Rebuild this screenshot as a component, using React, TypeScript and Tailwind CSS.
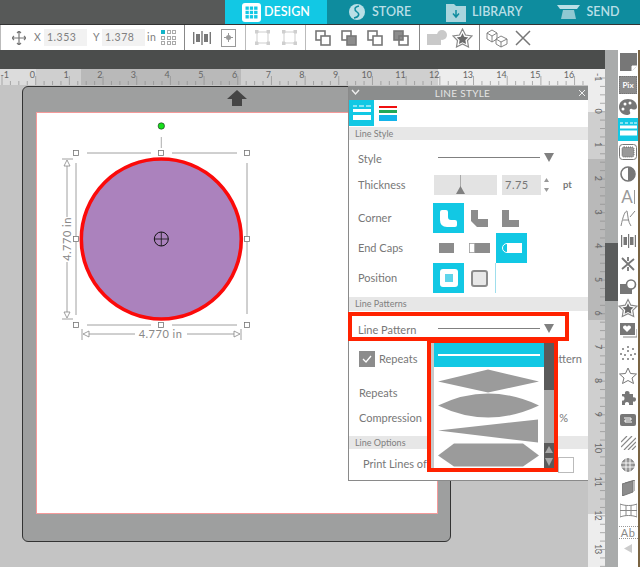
import type { ReactNode } from "react"

const FONT = "font-['Lato','Liberation_Sans',sans-serif]"

function Ruler() {
  const ticks = Array.from({ length: 72 }, (_, i) => i)
  return (
    <svg viewBox="0 69 588 16" className="block h-[16px] w-[588px]">
      <rect x="0" y="69" width="588" height="16" fill="#ededed" />
      <rect x="0" y="69" width="36" height="16" fill="#dcdcdc" />
      <rect x="36" y="69" width="402" height="16" fill="#cfcfcf" />
      <rect x="81" y="69" width="160" height="16" fill="#b9b9b9" />
      {ticks.map((i) => {
        const x = 2 + i * 8.42
        const major = i % 4 === 0
        return <line key={i} x1={x} x2={x} y1={major ? 76 : 81} y2="85" stroke="#8f8f8f" strokeWidth="0.7" />
      })}
      {Array.from({ length: 18 }, (_, i) => i - 1).map((n) => (
        <text key={n} x={n === -1 ? 9 : 36 + n * 33.7 - 1} y="78" textAnchor="end" fontSize="9" fill="#666" fontFamily="Lato">
          {n}
        </text>
      ))}
    </svg>
  )
}

function VerticalRuler() {
  const ticks = Array.from({ length: 60 }, (_, i) => i)
  return (
    <svg viewBox="588 69 17 498" className="block h-[498px] w-[17px] shrink-0">
      <rect x="588" y="69" width="17" height="498" fill="#ededed" />
      <rect x="588" y="112" width="17" height="402" fill="#cfcfcf" />
      <rect x="588" y="159" width="17" height="161" fill="#b9b9b9" />
      {ticks.map((i) => {
        const y = 78 + i * 8.42
        const major = i % 4 === 0
        return <line key={i} x1={major ? 596 : 600} x2="605" y1={y} y2={y} stroke="#8f8f8f" strokeWidth="0.7" />
      })}
      {Array.from({ length: 15 }, (_, i) => i - 1).map((n) => {
        const y = 112 + n * 33.7
        return (
          <text key={n} x="0" y="0" transform={`translate(595 ${y - 1}) rotate(90)`} textAnchor="middle" fontSize="9" fill="#666" fontFamily="Lato">
            {n}
          </text>
        )
      })}
    </svg>
  )
}

function Handle({ x, y }: { x: number; y: number }) {
  return <rect x={x - 2.5} y={y - 2.5} width="5" height="5" fill="#fff" stroke="#777" strokeWidth="0.8" />
}

function Artwork() {
  const handles = [
    [76, 153], [161, 153], [247, 153], [76, 239], [247, 239], [76, 325], [161, 325], [247, 325],
  ]
  return (
    <svg viewBox="0 85 348 482" className="absolute left-0 top-0 h-[482px] w-[348px]">
      <path d="M237 90 L247 99 L242 99 L242 106 L232 106 L232 99 L227 99 Z" fill="#454545" />
      <circle cx="161.3" cy="239" r="80" fill="#ab82bd" stroke="#fb0a0a" strokeWidth="3.6" />
      <circle cx="161.3" cy="239" r="7" fill="none" stroke="#111" strokeWidth="1" />
      <path d="M154.3 239 H168.3 M161.3 232 V246" stroke="#111" strokeWidth="0.8" />
      <circle cx="161.3" cy="126" r="3.2" fill="#16e01c" stroke="#222" strokeWidth="0.6" />
      <path d="M161.3 137 V148" stroke="#999" strokeWidth="0.8" />
      <path d="M87 153 H151 M172 153 H237 M76 163 V315 M247 163 V314 M87 325 H151 M172 325 H237" stroke="#888" strokeWidth="0.8" fill="none" />
      {handles.map(([x, y]) => (
        <Handle key={`${x}-${y}`} x={x} y={y} />
      ))}
      {/* height dimension */}
      <path d="M62 159 H73 M62 319 H73 M67 166 V217 M67 262 V312" stroke="#888" strokeWidth="0.8" />
      <path d="M67 160 L64 166 H70 Z M67 318 L64 312 H70 Z" fill="#fff" stroke="#888" strokeWidth="0.8" />
      <text transform="translate(71 239) rotate(-90)" textAnchor="middle" fontSize="11" letterSpacing="0.5" fill="#888" fontFamily="Lato">4.770 in</text>
      {/* width dimension */}
      <path d="M82 329 V340 M241 329 V340 M88 334 H135 M187 334 H234" stroke="#888" strokeWidth="0.8" />
      <path d="M83 334 L89 331 V337 Z M240 334 L234 331 V337 Z" fill="#fff" stroke="#888" strokeWidth="0.8" />
      <text x="160.5" y="338" textAnchor="middle" fontSize="11" letterSpacing="0.5" fill="#888" fontFamily="Lato">4.770 in</text>
    </svg>
  )
}

function Label({ children }: { children: ReactNode }) {
  return <span className="w-[76px] text-[11px] text-[#777]">{children}</span>
}

function SectionBar({ children, className }: { children: ReactNode; className: string }) {
  return <div className={`flex items-center bg-[#e7e7e7] pl-[6px] text-[9px] text-[#808080] ${className}`}>{children}</div>
}

function LineSwatch() {
  return (
    <div className="flex items-center gap-[4px]">
      <div className="h-[1px] w-[102px] bg-[#808080]" />
      <svg width="10" height="9" viewBox="0 0 10 9"><path d="M0 0 H10 L5 9 Z" fill="#808080" /></svg>
    </div>
  )
}

function CyanBox({ children, className = "" }: { children: ReactNode; className?: string }) {
  return <div className={`flex h-[30px] w-[31px] items-center justify-center bg-[#12c8e4] ${className}`}>{children}</div>
}

function CornerIcon({ kind, fill }: { kind: 0 | 1 | 2; fill: string }) {
  const d = [
    "M0 2 Q0 0 2 0 H6 Q8 0 8 2 V7 Q8 10 11 10 H15 Q17 10 17 12 V15 Q17 17 15 17 H7 Q0 17 0 10 Z",
    "M0 0 H7 V9 H17 V17 H6 L0 11 Z",
    "M0 0 H7 V10 H17 V17 H0 Z",
  ][kind]
  return <svg width="17" height="17" viewBox="0 0 17 17"><path d={d} fill={fill} /></svg>
}

function LineStylePanel() {
  return (
    <div className={`absolute left-[348px] top-[1px] z-10 h-[395px] w-[240px] border-b border-l border-[#8a8a8a] bg-white ${FONT}`}>
      <div className="relative flex h-[14px] items-center justify-center bg-[#8b8d8d] pr-[12px] text-[10px] tracking-[0.3px] text-[#e4e4e4]">
        <svg className="absolute left-[2px] top-[3px]" width="9" height="7" viewBox="0 0 9 7"><path d="M1 1 L4.5 5 L8 1" fill="none" stroke="#eee" strokeWidth="1.4" /></svg>
        LINE STYLE
        <svg className="absolute right-[2px] top-[3px]" width="8" height="8" viewBox="0 0 8 8"><path d="M1 1 L7 7 M7 1 L1 7" stroke="#eee" strokeWidth="1" /></svg>
      </div>
      <div className="flex h-[27px] items-start">
        <div className="flex h-[26px] w-[25px] flex-col items-center justify-center gap-[2px] bg-[#12c8e4]">
          <svg width="18" height="16" viewBox="0 0 18 16">
            <path d="M0 1 H4 M6 1 H11 M13 1 H18" stroke="#fff" strokeWidth="1.2" />
            <rect y="4" width="18" height="3" fill="#fff" />
            <rect y="10" width="18" height="5" fill="#fff" />
          </svg>
        </div>
        <svg className="ml-[5px] mt-[6px]" width="18" height="15" viewBox="0 0 18 15">
          <rect width="18" height="2" fill="#f01010" />
          <rect y="4" width="18" height="3" fill="#22a858" />
          <rect y="9" width="18" height="6" fill="#14b4ea" />
        </svg>
      </div>
      <SectionBar className="h-[13px]">Line Style</SectionBar>

      <div className="mt-[6px] flex h-[26px] items-center pl-[9px]">
        <Label>Style</Label>
        <div className="ml-[4px] -mt-[4px]"><LineSwatch /></div>
      </div>

      <div className="flex h-[26px] items-center pl-[9px]">
        <Label>Thickness</Label>
        <div className="relative h-[20px] w-[63px] bg-[#e3e3e3]">
          <div className="absolute bottom-[6px] left-[26px] top-0 w-[1px] bg-[#aaa]" />
          <svg className="absolute bottom-[1px] left-[22px]" width="9" height="8" viewBox="0 0 9 8"><path d="M4.5 0 L9 8 H0 Z" fill="#808080" /></svg>
        </div>
        <div className="ml-[5px] flex h-[20px] w-[39px] items-center bg-[#e3e3e3] pl-[3px] text-[11px] tracking-[0.5px] text-[#777]">7.75</div>
        <svg className="ml-[2px]" width="7" height="16" viewBox="0 0 7 16"><path d="M3.5 1 L6 5 H1 Z M3.5 15 L6 11 H1 Z" fill="#999" /></svg>
        <span className="ml-[13px] text-[9.5px] font-bold text-[#777]">pt</span>
      </div>

      <div className="mt-[5px] flex h-[30px] items-center pl-[9px]">
        <span className="w-[75px] text-[11px] text-[#777]">Corner</span>
        <CyanBox><CornerIcon kind={0} fill="#fff" /></CyanBox>
        <div className="ml-[7px]"><CornerIcon kind={1} fill="#8c8c8c" /></div>
        <div className="ml-[14px]"><CornerIcon kind={2} fill="#8c8c8c" /></div>
      </div>

      <div className="flex h-[30px] items-center pl-[9px]">
        <span className="w-[81px] text-[11px] text-[#777]">End Caps</span>
        <div className="h-[10px] w-[15px] bg-[#8c8c8c]" />
        <svg className="ml-[15px]" width="21" height="10" viewBox="0 0 21 10">
          <rect width="21" height="10" fill="#8c8c8c" />
          <rect x="0.5" y="0.5" width="5" height="9" fill="#fff" stroke="#999" strokeWidth="0.5" />
        </svg>
        <CyanBox className="ml-[6px]">
          <svg width="20" height="10" viewBox="0 0 20 10">
            <path d="M5 0 H20 V10 H5 Z" fill="#fff" />
            <path d="M5 0.5 A4.5 4.5 0 0 0 5 9.5" fill="none" stroke="#fff" strokeWidth="1" />
          </svg>
        </CyanBox>
      </div>

      <div className="flex h-[30px] items-center pl-[9px]">
        <span className="w-[75px] text-[11px] text-[#777]">Position</span>
        <CyanBox>
          <div className="flex h-[18px] w-[18px] items-center justify-center rounded-[3px] bg-white">
            <div className="h-[8px] w-[8px] bg-[#5fd4ea]" />
          </div>
        </CyanBox>
        <div className="ml-[7px] h-[17px] w-[17px] rounded-[3px] border-[2px] border-[#8c8c8c] bg-[#e8e8e8]" />
        <div className="ml-[7px] h-[30px] w-[1px] bg-[#9fdeec]" />
      </div>

      <SectionBar className="mt-[4px] h-[14px]">Line Patterns</SectionBar>

      <div className="flex h-[30px] items-center pl-[9px] pt-[8px]">
        <Label>Line Pattern</Label>
        <div className="ml-[4px] -mt-[4px]"><LineSwatch /></div>
      </div>

      <div className="mt-[10px] flex h-[16px] items-center pl-[10px]">
        <div className="flex h-[16px] w-[16px] items-center justify-center bg-[#8c8c8c]">
          <svg width="10" height="8" viewBox="0 0 10 8"><path d="M1 4 L4 7 L9 1" fill="none" stroke="#fff" strokeWidth="1.3" /></svg>
        </div>
        <span className="ml-[4px] text-[11px] text-[#777]">Repeats</span>
        <span className="ml-auto mr-[6px] text-[11px] text-[#777]">Stretch Pattern</span>
      </div>

      <div className="mt-[18px] flex h-[16px] items-center pl-[10px]">
        <Label>Repeats</Label>
      </div>

      <div className="mt-[9px] flex h-[16px] items-center pl-[10px]">
        <Label>Compression</Label>
        <span className="ml-auto mr-[20px] text-[11px] text-[#777]">%</span>
      </div>

      <SectionBar className="mt-[10px] h-[13px]">Line Options</SectionBar>

      <div className="flex h-[31px] items-center pl-[14px]">
        <span className="text-[11px] text-[#777]">Print Lines of Same Color</span>
        <div className="ml-auto mr-[14px] h-[16px] w-[16px] border border-[#bbb] bg-white" />
      </div>

      <div className="absolute left-[-1px] top-[226px] h-[29px] w-[221px] border-[4px] border-[#ff2200]" />
      <PatternDropdown />
    </div>
  )
}

function PatternDropdown() {
  return (
    <div className="absolute left-[78px] top-[255px] flex h-[131px] w-[131px] border-[4px] border-t-[2px] border-[#ff2200] bg-white">
      <div className="w-[3px] bg-[#c9c9c9]" />
      <div className="flex w-[110px] flex-col">
        <div className="flex h-[24px] items-center justify-center bg-[#12c8e4]">
          <div className="h-[1.5px] w-[102px] bg-white" />
        </div>
        <svg width="110" height="101" viewBox="433 367 110 98" className="block">
          <path d="M437 380 L487 368 L538 380 L487 391 Z" fill="#9b9b9b" />
          <path d="M437 404 Q487 380 538 404 Q487 428 437 404 Z" fill="#9b9b9b" />
          <path d="M437 429 L537 418 V441 Z" fill="#9b9b9b" />
          <path d="M437 454 L453 442 H522 L538 454 L522 465 H453 Z" fill="#9b9b9b" />
        </svg>
      </div>
      <div className="flex w-[10px] flex-col bg-[#a9a9a9]">
        <div className="h-[47px] bg-[#5a5a5a]" />
        <div className="flex-1" />
        <svg width="10" height="25" viewBox="0 0 10 25">
          <rect width="10" height="25" fill="#5a5a5a" />
          <path d="M5 3 L9 10 H1 Z M5 23 L9 15 H1 Z" fill="#a8a8a8" />
        </svg>
      </div>
    </div>
  )
}

function DesignTab() {
  return (
    <div className="flex h-[24px] w-[102px] items-center justify-center gap-[3px] bg-[#12c8e4] text-[12.5px] font-semibold text-white">
      <svg width="19" height="19" viewBox="0 0 19 19">
        <rect width="19" height="19" rx="3" fill="#fff" />
        <path d="M3 3 H16 V16 H3 Z M7.3 3 V16 M11.6 3 V16 M3 7.3 H16 M3 11.6 H16" fill="#12c8e4" stroke="#fff" strokeWidth="1" />
      </svg>
      DESIGN
    </div>
  )
}

function TopBar() {
  return (
    <div className={`flex h-[25px] border-b border-[#333] bg-[#575958] pl-[225px] ${FONT}`}>
      <DesignTab />
      <div className="flex flex-1 items-center bg-[#0e8c9e] text-[12.5px] font-semibold text-[#b9dfe6]">
        <svg className="ml-[22px]" width="16" height="16" viewBox="0 0 16 16">
          <circle cx="8" cy="8" r="8" fill="#b9dfe6" />
          <path d="M10 2 C5 3 5 6 8 8 C11 10 10 13 5 14" fill="none" stroke="#0e8c9e" strokeWidth="1.5" />
        </svg>
        <span className="ml-[7px]">STORE</span>
        <svg className="ml-[35px]" width="20" height="19" viewBox="0 0 20 19">
          <path d="M0 1 H8 L10 3 H20 V19 H0 Z" fill="#a9d5dd" />
          <path d="M10 7 V13 M7 10.5 L10 14 L13 10.5" fill="none" stroke="#0e8c9e" strokeWidth="1.5" />
        </svg>
        <span className="ml-[6px]">LIBRARY</span>
        <svg className="ml-[35px]" width="23" height="16" viewBox="0 0 23 16">
          <path d="M0 1 H23 L20 5 H3 Z" fill="#b9dfe6" />
          <path d="M6 6 H17 L19 15 H4 Z" fill="#8fc8d2" />
        </svg>
        <span className="ml-[6px]">SEND</span>
      </div>
    </div>
  )
}

function GroupIcon() {
  return (
    <svg width="15" height="15" viewBox="0 0 15 15" fill="none" stroke="#cfcfcf">
      <rect x="2" y="2" width="11" height="11" />
      <path d="M0 0 h3 v3 h-3z M12 0 h3 v3 h-3z M0 12 h3 v3 h-3z M12 12 h3 v3 h-3z" fill="#cfcfcf" />
    </svg>
  )
}

function ArrangeIcon({ variant }: { variant: number }) {
  const backFill = variant === 3 ? "#8c8c8c" : "none"
  const frontFill = variant === 1 ? "#8c8c8c" : "#fff"
  return (
    <svg width="16" height="16" viewBox="0 0 16 16" stroke="#777" strokeWidth="1.6">
      <rect x="1" y="1" width="9" height="9" fill={backFill} />
      <rect x="6" y="6" width="9" height="9" fill={variant === 3 ? "none" : frontFill} />
    </svg>
  )
}

function OutlinedStar() {
  return (
    <svg width="21" height="20" viewBox="0 0 21 20">
      <path d="M10.5 1 L13.5 7 L20 8 L15.5 12.5 L16.5 19 L10.5 16 L4.5 19 L5.5 12.5 L1 8 L7.5 7 Z" fill="#fff" stroke="#888" strokeWidth="1.2" />
      <path d="M10.5 5 L12.2 8.8 L16.3 9.4 L13.4 12.1 L14 16 L10.5 14.2 L7 16 L7.6 12.1 L4.7 9.4 L8.8 8.8 Z" fill="#6a6a6a" />
    </svg>
  )
}

function Toolbar() {
  return (
    <div className={`flex h-[25px] bg-white text-[#808080] ${FONT}`}>
      <div className="relative flex w-[184px] shrink-0 items-center border-l border-[#bbb] pl-[10px] text-[10.5px]">
        <svg width="14" height="14" viewBox="0 0 14 14" className="ml-[1px]" fill="none" stroke="#777" strokeWidth="1.2">
          <path d="M7 0 V14 M0 7 H14 M5 2 L7 0 L9 2 M5 12 L7 14 L9 12 M2 5 L0 7 L2 9 M12 5 L14 7 L12 9" />
        </svg>
        <span className="ml-[8px] w-[8px]">X</span>
        <span className="ml-[2px] flex h-[17px] w-[43px] items-center bg-[#f2f2f2] pl-[3px] tracking-[0.5px]">1.353</span>
        <span className="ml-[6px] w-[7px]">Y</span>
        <span className="ml-[2px] flex h-[17px] w-[43px] items-center bg-[#f2f2f2] pl-[3px] tracking-[0.5px]">1.378</span>
        <span className="ml-[2px] tracking-[0.5px]">in</span>
        <div className="ml-[5px] grid grid-cols-3 gap-[1.5px]">
          {Array.from({ length: 9 }, (_, i) => (
            <div key={i} className={i === 0 ? "h-[4px] w-[4px] bg-[#12b4c8]" : "h-[4px] w-[4px] border border-[#aaa]"} />
          ))}
        </div>
      </div>
      <div className="flex w-[61px] shrink-0 items-center border-l border-[#888] pl-[8px]">
        <svg width="18" height="14" viewBox="0 0 18 14" fill="#777">
          <rect x="0" y="1" width="1.4" height="12" />
          <rect x="16.6" y="1" width="1.4" height="12" />
          <rect x="3" y="3" width="4" height="8" />
          <rect x="11" y="3" width="4" height="8" />
          <rect x="8.3" y="0" width="1.4" height="14" />
        </svg>
        <div className="ml-[10px] flex h-[18px] w-[15px] items-center justify-center border border-[#999]">
          <svg width="9" height="9" viewBox="0 0 9 9"><circle cx="4.5" cy="4.5" r="2.5" fill="#999" /><path d="M4.5 0 V9 M0 4.5 H9" stroke="#999" /></svg>
        </div>
      </div>
      <div className="flex w-[60px] shrink-0 items-center gap-[12px] border-l border-[#bbb] pl-[9px]">
        <GroupIcon />
        <GroupIcon />
      </div>
      <div className="flex w-[114px] shrink-0 items-center gap-[10px] border-l border-[#bbb] pl-[9px]">
        <ArrangeIcon variant={0} />
        <ArrangeIcon variant={1} />
        <ArrangeIcon variant={2} />
        <ArrangeIcon variant={3} />
      </div>
      <div className="flex w-[60px] shrink-0 items-center gap-[4px] border-l border-[#888] pl-[7px]">
        <svg width="21" height="15" viewBox="0 0 21 15"><rect x="0" y="4" width="14" height="11" fill="#c9c9c9" /><circle cx="15" cy="5" r="5" fill="#c9c9c9" /></svg>
        <OutlinedStar />
      </div>
      <div className="flex flex-1 items-center gap-[7px] border-l border-[#888] pl-[6px]">
        <svg width="22" height="20" viewBox="0 0 22 20" fill="#fff" stroke="#777" strokeWidth="0.9">
          <path d="M1 5 L6 2 L11 5 L6 8 Z M1 5 V11 L6 14 L11 11 V5 M6 8 V14" />
          <path d="M10 11 L15 8 L21 11 L15 14 Z M10 11 V16 L15 19 L21 16 V11 M15 14 V19" />
        </svg>
        <svg width="16" height="16" viewBox="0 0 16 16"><path d="M1 1 L15 15 M15 1 L1 15" stroke="#777" strokeWidth="1.5" /></svg>
      </div>
    </div>
  )
}

const sideIcons: ReactNode[] = [
  <svg width="17" height="18" viewBox="0 0 17 18"><path d="M0 0 H17 V13 L12 18 H0 Z" fill="#777" /><path d="M12 18 V13 H17" fill="#fff" stroke="#fff" /></svg>,
  <div className="flex h-[18px] w-[18px] items-center justify-center border border-dotted border-[#777] bg-[#8c8c8c] text-[8px] font-bold text-white">Pix</div>,
  <svg width="18" height="16" viewBox="0 0 18 16"><path d="M9 0 C14 0 18 3 18 8 C18 11 14 11 13 10 C11 9 10 11 11 13 C12 15 10 16 8 16 C3 16 0 12 0 8 C0 3 4 0 9 0 Z" fill="#777" /><circle cx="6" cy="5" r="1.5" fill="#fff" /><circle cx="11" cy="4" r="1.5" fill="#fff" /><circle cx="4" cy="10" r="1.5" fill="#fff" /></svg>,
  <svg width="17" height="14" viewBox="0 0 17 14"><path d="M0 1 H3 M5 1 H8 M10 1 H13 M14 1 H17" stroke="#fff" /><rect y="3.5" width="17" height="3" fill="#fff" /><rect y="8.5" width="17" height="5" fill="#fff" /></svg>,
  <svg width="18" height="16" viewBox="0 0 18 16"><rect x="0.5" y="0.5" width="17" height="15" rx="3" fill="none" stroke="#777" /><rect x="3" y="3" width="12" height="10" rx="2" fill="#999" stroke="#666" strokeDasharray="1 1" /></svg>,
  <svg width="16" height="16" viewBox="0 0 16 16"><circle cx="8" cy="8" r="7" fill="#fff" stroke="#777" strokeWidth="1.6" /><path d="M8 1 A7 7 0 0 1 8 15 Z" fill="#777" /></svg>,
  <div className="flex items-center text-[17px] leading-none text-[#999]">A<span className="ml-[1px] h-[14px] w-[1px] bg-[#999]" /></div>,
  <svg width="16" height="17" viewBox="0 0 16 17" fill="none" stroke="#888"><path d="M1 16 C3 6 5 1 7 1 C8 6 8 12 11 16 M3 10 H9 M10 7 L15 1" /></svg>,
  <svg width="15" height="14" viewBox="0 0 15 14" fill="#777"><rect y="1" width="1.2" height="12" /><rect x="13.8" y="1" width="1.2" height="12" /><rect x="2.5" y="3" width="3.5" height="8" /><rect x="9" y="3" width="3.5" height="8" /><rect x="7" width="1.2" height="14" /></svg>,
  <svg width="16" height="16" viewBox="0 0 16 16" stroke="#777" strokeWidth="1.8"><path d="M2 2 L14 14 M14 3 L2 13 M8 1 V5 M8 11 V15" /></svg>,
  <svg width="17" height="15" viewBox="0 0 17 15"><rect y="5" width="12" height="10" fill="#777" /><circle cx="11" cy="5.5" r="4.5" fill="#fff" stroke="#777" strokeWidth="1.6" /></svg>,
  <OutlinedStar />,
  <svg width="17" height="16" viewBox="0 0 17 16"><rect width="15" height="12" fill="#777" /><path d="M7 9 L3 5 C3 2 6 2 7 4 C8 2 11 2 11 5 Z" fill="#fff" /><path d="M3 14 H17 V6" fill="none" stroke="#888" /></svg>,
  <svg width="16" height="15" viewBox="0 0 16 15" fill="#777">{[[8, 1], [3, 3], [8, 5], [13, 3], [1, 8], [5, 9], [11, 9], [15, 8], [3, 13], [8, 13], [13, 13]].map(([x, y]) => <circle key={`${x}${y}`} cx={x} cy={y} r="1" />)}</svg>,
  <svg width="18" height="17" viewBox="0 0 18 17"><path d="M9 1 L11.5 6.5 L17.5 7 L13 11 L14.5 16.5 L9 13.5 L3.5 16.5 L5 11 L0.5 7 L6.5 6.5 Z" fill="#fff" stroke="#777" /></svg>,
  <svg width="15" height="15" viewBox="0 0 15 15"><path d="M6 0 C8 0 9 1 8.5 3 H12 V6.5 C14 6 15 7 15 8.5 C15 10 14 11 12 10.5 V14 H8 C8.5 12 7.5 11 6 11 C4.5 11 3.5 12 4 14 H1 V9.5 C2.5 10 3.5 9 3.5 7.5 C3.5 6 2.5 5 1 5.5 V3 H4 C3.5 1 4.5 0 6 0 Z" fill="#777" /></svg>,
  <svg width="16" height="12" viewBox="0 0 16 12"><rect width="16" height="12" rx="2" fill="#777" /><path d="M4 4 H11 V6 H5 V8 H12" fill="none" stroke="#fff" /></svg>,
  <svg width="15" height="14" viewBox="0 0 15 14" stroke="#888" strokeWidth="1.2"><path d="M0 6 L6 0 M0 11 L11 0 M3 14 L15 2 M7 14 L15 6 M11 14 L15 10" /></svg>,
  <svg width="14" height="14" viewBox="0 0 14 14" fill="none" stroke="#777"><circle cx="7" cy="7" r="6.3" fill="#999" /><path d="M0 5 H14 M0 9 H14 M5 0 V14 M9 0 V14" stroke="#fff" strokeWidth="0.9" /></svg>,
  <svg width="13" height="16" viewBox="0 0 13 16"><path d="M3 3 L13 0 V11" fill="#fff" stroke="#777" /><path d="M0 4 L11 1 V12 L0 16 Z" fill="#8c8c8c" stroke="#777" /></svg>,
  <svg width="17" height="15" viewBox="0 0 17 15" fill="none" stroke="#888"><path d="M0 1 C5 3 12 3 17 1 V14 C12 12 5 12 0 14 Z M6 2 V13 M11 2 V13 M0 7.5 H17" /></svg>,
  <div className="flex h-[13px] w-[19px] items-center justify-center border-y border-dotted border-[#999] text-[11px] leading-none tracking-[0.5px] text-[#888]">Ab</div>,
  <svg width="8" height="9" viewBox="0 0 8 9"><path d="M0 4.5 L8 0 V9 Z" fill="#ccc" /></svg>,
]

function SideIcons() {
  return (
    <div className={`flex w-[20px] shrink-0 flex-col items-center bg-white pt-[1px] ${FONT}`}>
      {sideIcons.map((icon, i) => (
        <div
          key={i}
          className={
            i === 3
              ? "flex h-[22.4px] w-full items-center justify-center bg-[#12c8e4]"
              : i === 22
                ? "-mt-[6px] flex h-[22.4px] w-full items-center justify-center"
                : "flex h-[22.4px] w-full items-center justify-center"
          }
        >
          {icon}
        </div>
      ))}
    </div>
  )
}

export default function App() {
  return (
    <div className={`flex h-[567px] w-[640px] flex-col overflow-hidden bg-[#c4c4c4] ${FONT}`}>
      <TopBar />
      <Toolbar />
      <div className="flex flex-1 overflow-hidden">
        <div className="flex w-[605px] shrink-0 flex-col">
          <div className="h-[19px] bg-[#4b4d4c]" />
          <div className="flex flex-1">
            <div className="flex w-[588px] shrink-0 flex-col">
              <Ruler />
              <div className="relative flex-1 bg-[#c4c4c4]">
                <div className="absolute left-[22px] top-[1px] h-[456px] w-[429px] rounded-[6px] border border-[#333] bg-[#9e9f9f]" />
                <div className="absolute left-[36px] top-[27px] h-[402px] w-[402px] border border-[#f59a9a] bg-white" />
                <Artwork />
                <LineStylePanel />
              </div>
            </div>
            <VerticalRuler />
          </div>
        </div>
        <div className="relative w-[13px] shrink-0 bg-[#a9abab]">
          <div className="absolute left-0 top-[193px] h-[58px] w-full bg-[#5a5c5c]" />
        </div>
        <SideIcons />
        <div className="flex-1 bg-[#7a6443]" />
      </div>
    </div>
  )
}
